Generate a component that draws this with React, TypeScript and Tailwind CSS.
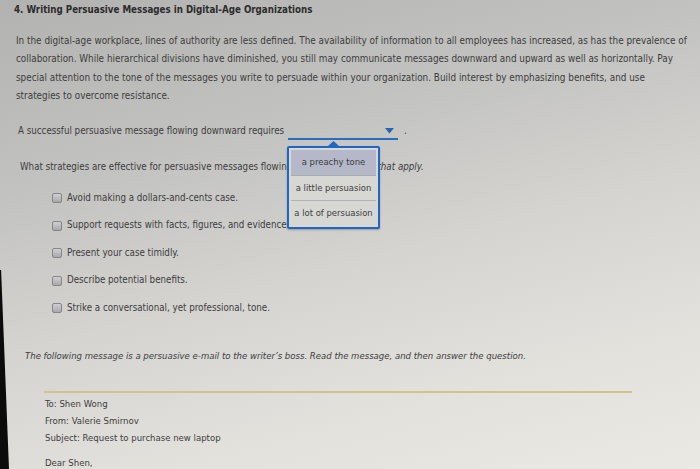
import React from "react";

const font = "[font-family:'DejaVu_Sans_Condensed','DejaVu_Sans',sans-serif]";

function Checkbox() {
  return (
    <span className="inline-block w-[10px] h-[10px] rounded-[2px] border border-[#86868a] bg-[linear-gradient(180deg,#cfcfd1,#a9a9ac)] shrink-0" />
  );
}

function Option({ label }: { label: string }) {
  return (
    <div className="flex items-center h-[18px] pl-[52px] gap-[5px]">
      <Checkbox />
      <span>{label}</span>
    </div>
  );
}

export default function App() {
  return (
    <div
      className={`relative w-[700px] h-[469px] overflow-hidden text-[9.7px] text-[#3d3d3d] ${font} bg-[linear-gradient(165deg,#b2b2b0_0%,#c2c2c0_30%,#d5d4d1_55%,#e3e1dc_78%,#ebe9e4_100%)]`}
    >
      <div className="pt-[1px]">
        <div className="h-[18px] leading-[18px] pl-[14px] font-bold text-[#2c2c2c] whitespace-nowrap">
          4. Writing Persuasive Messages in Digital-Age Organizations
        </div>

        <p className="mt-[13px] pl-[16px] leading-[18.3px] text-[9.85px] whitespace-nowrap">
          In the digital-age workplace, lines of authority are less defined. The availability of information to all employees has increased, as has the prevalence of
          <br />
          collaboration. While hierarchical divisions have diminished, you still may communicate messages downward and upward as well as horizontally. Pay
          <br />
          special attention to the tone of the messages you write to persuade within your organization. Build interest by emphasizing benefits, and use
          <br />
          strategies to overcome resistance.
        </p>

        <div className="mt-[17px] h-[18px] pl-[18px] flex items-center whitespace-nowrap">
          <span>A successful persuasive message flowing downward requires</span>
          <span className="relative ml-[4px] inline-block w-[110px] h-[18px] border-b-2 border-[#2a6cc0]">
            <svg className="absolute right-[4px] top-[6px]" width="9" height="6" viewBox="0 0 9 6">
              <polygon points="0,0 9,0 4.5,5.5" fill="#2364b5" />
            </svg>
          </span>
          <span className="ml-[6px]">.</span>
        </div>

        <div className="mt-[18px] h-[18px] pl-[20px] flex items-center whitespace-nowrap">
          <span>
            What strategies are effective for persuasive messages flowing upward?{" "}
            <i>Check all that apply.</i>
          </span>
        </div>

        <div className="mt-[13px] flex flex-col gap-[9.5px]">
          <Option label="Avoid making a dollars-and-cents case." />
          <Option label="Support requests with facts, figures, and evidence." />
          <Option label="Present your case timidly." />
          <Option label="Describe potential benefits." />
          <Option label="Strike a conversational, yet professional, tone." />
        </div>

        <div className="mt-[30px] h-[18px] leading-[18px] pl-[25px] italic text-[9.5px] whitespace-nowrap">
          The following message is a persuasive e-mail to the writer&rsquo;s boss. Read the message, and then answer the question.
        </div>

        <div className="mt-[26px] ml-[44px] w-[588px] h-[2px] bg-[#d2c38e]" />

        <div className="mt-[2px] pl-[45px] leading-[17px] text-[9.5px] whitespace-nowrap">
          <div>To: Shen Wong</div>
          <div>From: Valerie Smirnov</div>
          <div>Subject: Request to purchase new laptop</div>
          <div className="mt-[8px]">Dear Shen,</div>
        </div>
      </div>

      {/* open dropdown list */}
      <div className="absolute left-[287px] top-[141px] w-[93px] text-[9.4px]">
        <svg className="block mx-auto" width="11" height="5" viewBox="0 0 11 5">
          <polygon points="0,5 5.5,0 11,5" fill="#2067c4" />
        </svg>
        <div className="border-2 border-[#2067c4] rounded-[2px] bg-[#d7d7d4] p-[2px] shadow-[0_1px_2px_rgba(0,0,0,0.25)]">
          <div className="h-[26px] flex items-center justify-center bg-[#b4b8c8] border-b border-[#a9abb3] whitespace-nowrap">
            a preachy tone
          </div>
          <div className="h-[25px] flex items-center justify-center border-b border-[#b3b3b3] whitespace-nowrap">
            a little persuasion
          </div>
          <div className="h-[24px] flex items-center justify-center whitespace-nowrap">a lot of persuasion</div>
        </div>
      </div>

      {/* photo edge */}
      <div className="absolute left-0 top-[270px] w-[9px] h-[199px] bg-[#0b0b0b] [clip-path:polygon(0_0,12%_0,100%_100%,0_100%)]" />
    </div>
  );
}
